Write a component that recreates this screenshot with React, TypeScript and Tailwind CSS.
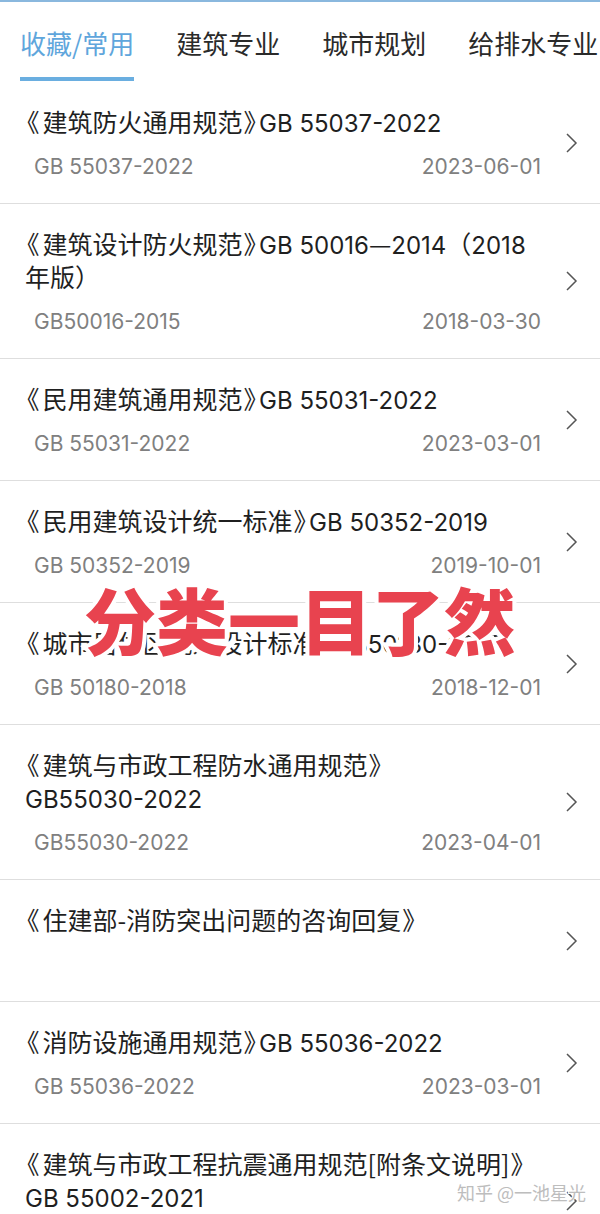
import React from "react";

type Item = { title: string; code: string; date: string };

const items: Item[] = [
  { title: "《建筑防火通用规范》GB 55037-2022", code: "GB 55037-2022", date: "2023-06-01" },
  { title: "《建筑设计防火规范》GB 50016—2014（2018年版）", code: "GB50016-2015", date: "2018-03-30" },
  { title: "《民用建筑通用规范》GB 55031-2022", code: "GB 55031-2022", date: "2023-03-01" },
  { title: "《民用建筑设计统一标准》GB 50352-2019", code: "GB 50352-2019", date: "2019-10-01" },
  { title: "《城市居住区规划设计标准》GB50180-2018", code: "GB 50180-2018", date: "2018-12-01" },
  { title: "《建筑与市政工程防水通用规范》GB55030-2022", code: "GB55030-2022", date: "2023-04-01" },
  { title: "《住建部-消防突出问题的咨询回复》", code: "", date: "" },
  { title: "《消防设施通用规范》GB 55036-2022", code: "GB 55036-2022", date: "2023-03-01" },
  { title: "《建筑与市政工程抗震通用规范[附条文说明]》GB 55002-2021", code: "", date: "" },
];

const tabs = ["收藏/常用", "建筑专业", "城市规划", "给排水专业"];

function renderTitle(s: string) {
  const parts = s
    .split(/(《|》|—|[A-Za-z0-9][A-Za-z0-9 \-]*[A-Za-z0-9]|[A-Za-z0-9])/)
    .filter((p) => p !== "" && p !== undefined);
  return parts.map((p, i) => {
    if (p === "《")
      return (
        <span key={i} className="[font-feature-settings:'halt'] ml-[2px] mr-[3px]">
          《
        </span>
      );
    if (p === "》")
      return (
        <span key={i} className="[font-feature-settings:'halt'] ml-[1px] mr-[3px]">
          》
        </span>
      );
    if (p === "—") return <span key={i}>—</span>;
    if (/^[A-Za-z0-9]/.test(p))
      return (
        <span key={i} className="whitespace-nowrap [font-family:Inter,sans-serif] text-[24px] leading-[20px]">
          {p}
        </span>
      );
    return <span key={i}>{p}</span>;
  });
}

function Chevron() {
  return (
    <svg width="14" height="22" viewBox="0 0 14 22" fill="none" className="shrink-0">
      <polyline points="3,2 12,11 3,20" stroke="#555" strokeWidth="1.5" strokeLinejoin="miter" />
    </svg>
  );
}

export default function App() {
  return (
    <div className="relative w-[600px] h-[1214px] overflow-hidden bg-white [font-family:'Noto_Sans_CJK_SC',sans-serif]">
      {/* Tab bar */}
      <div className="h-[82px] border-t-2 border-[#8ab8de] flex gap-[42px] pl-[20px] whitespace-nowrap overflow-hidden">
        {tabs.map((t, i) => (
          <div key={t} className="flex flex-col pt-[23px] shrink-0">
            <div
              className={
                "text-[26px] leading-[36px] " + (i === 0 ? "text-[#5fa6dc]" : "text-[#2a2a2a]")
              }
            >
              {t}
            </div>
            <div className={"mt-[16px] h-[4px] " + (i === 0 ? "bg-[#6aaee0]" : "bg-transparent")} />
          </div>
        ))}
      </div>

      {/* List */}
      <div className="flex flex-col">
        {items.map((it, i) => (
          <div key={i} className="flex items-center border-b border-[#dedede]">
            <div className="flex-1 min-w-0 pl-[25px] pr-[12px] pt-[23px] pb-[22px]">
              <div className="text-[25px] leading-[33px] text-[#1f1f1f]">{renderTitle(it.title)}</div>
              <div className="mt-[15px] h-[28px] flex justify-between items-center pl-[9px] pr-[2px] text-[21px] leading-[28px] text-[#808080] [font-family:Inter,sans-serif]">
                <span>{it.code}</span>
                <span>{it.date}</span>
              </div>
            </div>
            <div className="w-[45px] flex justify-start pl-[9px]">
              <Chevron />
            </div>
          </div>
        ))}
      </div>

      {/* Overlay caption */}
      <div className="absolute left-0 right-0 top-[576px] flex justify-center">
        <div className="text-[72px] leading-[84px] font-black text-[#e8434f] [font-family:'Noto_Sans_CJK_SC',sans-serif] [-webkit-text-stroke:8px_white] [paint-order:stroke_fill] [text-shadow:0_0_6px_rgba(255,255,255,0.9)]">
          分类一目了然
        </div>
      </div>

      {/* Watermark */}
      <div className="absolute right-[14px] top-[1179px] text-[18px] leading-[26px] text-[#bdbdbd] [font-family:'Noto_Sans_CJK_SC',sans-serif] [-webkit-text-stroke:2px_white] [paint-order:stroke_fill]">
        知乎 @一池星光
      </div>
    </div>
  );
}
